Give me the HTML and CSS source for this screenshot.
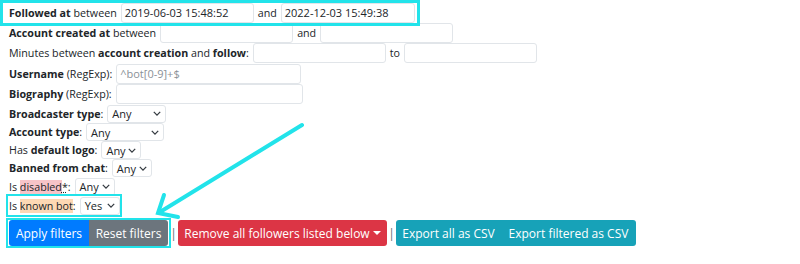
FILE: index.html
```html
<!DOCTYPE html>
<html>
<head>
<meta charset="utf-8">
<link rel="stylesheet" href="styles.css">
</head>
<body>
<div class="page">
  <div class="row r1 hl1">
    <span class="lbl"><b>Followed at</b> between</span>
    <div class="inp w133">2019-06-03 15:48:52</div>
    <span class="mid">and</span>
    <div class="inp w134">2022-12-03 15:49:38</div>
  </div>
  <div class="row">
    <span class="lbl"><b>Account created at</b> between</span>
    <div class="inp w133"></div>
    <span class="mid">and</span>
    <div class="inp w133"></div>
  </div>
  <div class="row">
    <span class="lbl">Minutes between <b>account creation</b> and <b>follow</b>:</span>
    <div class="inp w133"></div>
    <span class="mid">to</span>
    <div class="inp w133"></div>
  </div>
  <div class="row r4">
    <span class="lbl"><b>Username</b> (RegExp):</span>
    <div class="inp w185 ph">^bot[0-9]+$</div>
  </div>
  <div class="row">
    <span class="lbl"><b>Biography</b> (RegExp):</span>
    <div class="inp w187"></div>
  </div>
  <div class="row srow r6">
    <span class="lbl"><b>Broadcaster type</b>:</span>
    <div class="sel w59"><span>Any</span><svg class="chev" viewBox="0 0 10 6"><path d="M1 1 L5 5 L9 1"/></svg></div>
  </div>
  <div class="row srow">
    <span class="lbl"><b>Account type</b>:</span>
    <div class="sel w78"><span>Any</span><svg class="chev" viewBox="0 0 10 6"><path d="M1 1 L5 5 L9 1"/></svg></div>
  </div>
  <div class="row srow">
    <span class="lbl">Has <b>default logo</b>:</span>
    <div class="sel w40"><span>Any</span><svg class="chev" viewBox="0 0 10 6"><path d="M1 1 L5 5 L9 1"/></svg></div>
  </div>
  <div class="row srow">
    <span class="lbl"><b>Banned from chat</b>:</span>
    <div class="sel w40"><span>Any</span><svg class="chev" viewBox="0 0 10 6"><path d="M1 1 L5 5 L9 1"/></svg></div>
  </div>
  <div class="row srow r10">
    <span class="lbl">Is <span class="mark-red">disabled</span><abbr class="star">*</abbr>:</span>
    <div class="sel w40"><span>Any</span><svg class="chev" viewBox="0 0 10 6"><path d="M1 1 L5 5 L9 1"/></svg></div>
  </div>
  <div class="row srow r11 hl2">
    <span class="lbl">Is <span class="mark-org">known bot</span>:</span>
    <div class="sel w40"><span>Yes</span><svg class="chev" viewBox="0 0 10 6"><path d="M1 1 L5 5 L9 1"/></svg></div>
  </div>
  <div class="actions">
    <div class="btn-group hl3">
      <button class="btn blue">Apply filters</button>
      <button class="btn gray">Reset filters</button>
    </div>
    <span class="sep">|</span>
    <button class="btn red">Remove all followers listed below <span class="caret"></span></button>
    <span class="sep">|</span>
    <div class="btn-group teal-group">
      <button class="btn teal t1">Export all as CSV</button>
      <button class="btn teal t2">Export filtered as CSV</button>
    </div>
  </div>
</div>
<svg class="arrow" width="800" height="264" viewBox="0 0 800 264">
  <path d="M302 125 L160 212" />
  <path d="M164 195 L158 213 L178 217" />
</svg>
</body>
</html>
```
FILE: styles.css
```css
html, body {
  margin: 0;
  padding: 0;
  background: #ffffff;
}
body {
  font-family: "Open Sans", "Noto Sans", sans-serif;
  font-size: 10.7px;
  color: #212529;
  position: relative;
  width: 800px;
  height: 264px;
  overflow: hidden;
}
.page {
  padding-top: 3px;
}
b { font-weight: 700; }
.row {
  display: flex;
  align-items: center;
  height: 20px;
  padding-left: 9px;
  white-space: nowrap;
}
.r4 { height: 21px; }
.srow { height: 18px; }
.r6 { height: 19px; }
.r10 { height: 19px; }
.r1 {
  width: max-content;
  margin-left: 3px;
  padding-left: 6px;
  padding-right: 2px;
}
.hl1 { outline: 3px solid #22e3ea; }
.lbl { margin-right: 4px; }
.mid { margin: 0 4px; }
.inp {
  box-sizing: border-box;
  height: 20px;
  border: 1px solid #e1e5e9;
  border-radius: 3px;
  padding: 0 3px;
  line-height: 18px;
  color: #212529;
  font-size: 11px;
}
.ph { color: #8a9197; }
.w133 { width: 133px; }
.w134 { width: 134px; }
.w185 { width: 185px; }
.w187 { width: 187px; }
.w59 { width: 59px; }
.w78 { width: 78px; }
.w40 { width: 40px; }
.sel {
  box-sizing: border-box;
  height: 18px;
  border: 1px solid #e1e5e9;
  border-radius: 3px;
  padding: 0 4px;
  display: flex;
  align-items: center;
  justify-content: space-between;
  font-size: 11px;
}
.chev {
  width: 8px;
  height: 5px;
  fill: none;
  stroke: #343a40;
  stroke-width: 1.6;
}
.mark-red { background: #f7c4c8; }
.mark-org { background: #fdd8b4; }
.star {
  text-decoration: underline dotted;
}
.r11 {
  height: 19px;
  width: max-content;
  margin-left: 8px;
  padding-left: 1px;
}
.hl2 { outline: 2px solid #22e3ea; }
.actions {
  display: flex;
  align-items: center;
  margin-top: 5px;
  margin-left: 8px;
}
.btn-group {
  display: flex;
}
.hl3 {
  outline: 2px solid #22e3ea;
  padding: 0 1px;
}
.btn {
  border: none;
  font-family: inherit;
  font-size: 12px;
  color: #ffffff;
  height: 26px;
  padding: 0;
  white-space: nowrap;
  cursor: pointer;
}
.blue { background: #007bff; border-radius: 3px 0 0 3px; width: 80px; }
.gray { background: #6c757d; border-radius: 0 3px 3px 0; width: 79px; }
.red {
  background: #dc3545;
  border-radius: 3px;
  width: 209px;
  display: flex;
  align-items: center;
  justify-content: center;
  gap: 3px;
}
.teal { background: #17a2b8; }
.t1 { border-radius: 3px 0 0 3px; width: 105px; }
.t2 { border-radius: 0 3px 3px 0; width: 135px; }
.sep {
  color: #6c757d;
  font-size: 13px;
  width: 9px;
  text-align: center;
}
.caret {
  display: inline-block;
  width: 0;
  height: 0;
  border-left: 4px solid transparent;
  border-right: 4px solid transparent;
  border-top: 4px solid #ffffff;
}
.arrow {
  position: absolute;
  left: 0;
  top: 0;
  pointer-events: none;
}
.arrow path {
  fill: none;
  stroke: #22e3ea;
  stroke-width: 4;
  stroke-linecap: round;
  stroke-linejoin: miter;
}
```
